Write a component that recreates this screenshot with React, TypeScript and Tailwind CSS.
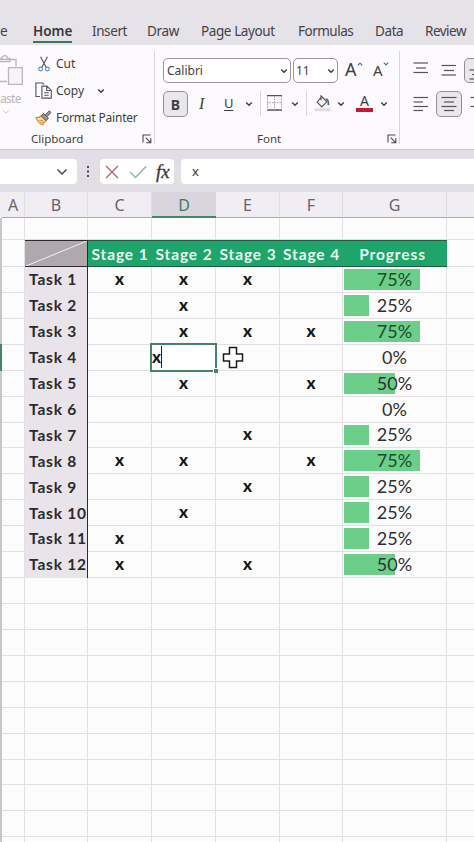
import type { ReactNode } from "react";
import clsx from "clsx";

const tabs = [
  { label: "e", className: "w-[33px]" },
  { label: "Home", className: "w-[59px] font-semibold", active: true },
  { label: "Insert", className: "w-[55px] tracking-[-0.4px]" },
  { label: "Draw", className: "w-[54px] tracking-[-0.3px]" },
  { label: "Page Layout", className: "w-[97px] tracking-[-0.4px]" },
  { label: "Formulas", className: "w-[77px] tracking-[-0.5px]" },
  { label: "Data", className: "w-[50px] tracking-[-0.4px]" },
  { label: "Review", className: "w-[49px] tracking-[-0.5px]" },
];

const tasks = [
  { name: "Task 1", marks: [1, 1, 1, 0], progress: 75 },
  { name: "Task 2", marks: [0, 1, 0, 0], progress: 25 },
  { name: "Task 3", marks: [0, 1, 1, 1], progress: 75 },
  { name: "Task 4", marks: [0, 0, 0, 0], progress: 0, editing: true },
  { name: "Task 5", marks: [0, 1, 0, 1], progress: 50 },
  { name: "Task 6", marks: [0, 0, 0, 0], progress: 0 },
  { name: "Task 7", marks: [0, 0, 1, 0], progress: 25 },
  { name: "Task 8", marks: [1, 1, 0, 1], progress: 75 },
  { name: "Task 9", marks: [0, 0, 1, 0], progress: 25 },
  { name: "Task 10", marks: [0, 1, 0, 0], progress: 25 },
  { name: "Task 11", marks: [1, 0, 0, 0], progress: 25 },
  { name: "Task 12", marks: [1, 0, 1, 0], progress: 50 },
];

const columns = ["A", "B", "C", "D", "E", "F", "G", ""];
const stages = ["Stage 1", "Stage 2", "Stage 3", "Stage 4"];

const rowGrid = "grid grid-cols-[23px_63px_64px_64px_64px_63px_104px_28px] pl-[2px]";
const cell = "border-r border-b border-[#e3e0e5]";

const Chevron = ({ className }: { className?: string }) => (
  <svg viewBox="0 0 8 6" className={clsx("h-[6px] w-[8px] shrink-0", className)} fill="none" stroke="#3f3e43" strokeWidth="1.4">
    <path d="M1.2 1.4 4 4.2l2.8-2.8" />
  </svg>
);

const Launcher = () => (
  <svg viewBox="0 0 10 10" className="h-[10px] w-[10px] shrink-0" fill="none" stroke="#4a494e" strokeWidth="1.1">
    <path d="M1 8.5V1h7.5M3.7 3.7l4.6 4.6M8.8 4.2v4.6H4.2" />
  </svg>
);

const ScissorsIcon = () => (
  <svg viewBox="0 0 12 16" className="h-4 w-3" fill="none" strokeWidth="1.1">
    <path d="M2.6.8 8.2 11.4M9.4.8 3.8 11.4" stroke="#55545a" />
    <circle cx="2.6" cy="13" r="1.9" stroke="#4c93bd" />
    <circle cx="9.4" cy="13" r="1.9" stroke="#4c93bd" />
  </svg>
);

const CopyIcon = () => (
  <svg viewBox="0 0 18 17" className="h-[17px] w-[18px]" fill="none" stroke="#55545a" strokeWidth="1.1">
    <path d="M5 14.5H.9V1h6.6l1.4 1.4" />
    <path d="M6.9 4.1h5l4.4 4.3v7.7H6.9zM11.7 4.3v4.2h4.4M9.2 10.8h4.6M9.2 13.2h4.6" />
  </svg>
);

const BrushIcon = () => (
  <svg viewBox="0 0 17 16" className="h-4 w-[17px]" fill="none">
    <path d="M1 7.6c2.4.3 3.8-.3 5-1.6l5 4.8c-1.4 1.2-2.5 2.6-3.4 4.2C4.5 13.8 2.4 11.4 1 7.6Z" fill="#fbdfae" stroke="#dc943b" strokeWidth="1.2" />
    <path d="m3.6 10.7 4.5-.3M5 13l4.7-1" stroke="#dc943b" />
    <path d="m6.2 5.6 2.3-2.1 5 4.8-2.3 2.3zM10.3 5l3.6-3.8c.7-.6 2.3.8 1.6 1.7L12 6.7" fill="#9b9aa0" stroke="#55545a" />
  </svg>
);

const PasteIcon = () => (
  <svg viewBox="0 0 24 34" className="h-[34px] w-6" fill="none" stroke="#b9b6bc" strokeWidth="1.3">
    <path d="M0 6.5h16v7M0 28.5h7" />
    <path d="M0 8.6h10V5.4H7.6C7.2 3.5 6.3 2.6 4.8 2.6S2.3 3.5 1.9 5.4H0" />
    <path d="M8.5 14.6h13.8v16.8H8.5z" fill="#f7f4f8" />
  </svg>
);

const BordersIcon = () => (
  <svg viewBox="0 0 17 18" className="h-[18px] w-[17px]" fill="none">
    <path d="M1 1.7h15M1 16h15" stroke="#55545a" strokeWidth="1.3" />
    <path d="M1.5 2v14M15.5 2v14M8.5 2v14M1 8.7h15" stroke="#a5a3a9" strokeDasharray="1.5 1" />
  </svg>
);

const FillIcon = () => (
  <svg viewBox="0 0 17 18" className="h-[18px] w-[17px]" fill="none">
    <path d="M7.6 2.5 3.2 8.2l4.6 4.6 5-5zM7 1.2v5" stroke="#55545a" strokeWidth="1.2" />
    <path d="M11.8 5.2c2-.3 3 2.5 2.5 6" stroke="#3f7294" strokeWidth="1.7" />
    <path d="M.5 14.3h16v3H.5z" fill="#dedce0" />
  </svg>
);

const GrowIcon = ({ down }: { down?: boolean }) => (
  <svg viewBox="0 0 6 4" className="h-1 w-[6px]" fill="none" stroke="#3f7294" strokeWidth="1.1">
    <path d={down ? "M.8.7 3 2.9 5.2.7" : "M.8 3.3 3 1.1l2.2 2.2"} />
  </svg>
);

const LinesIcon = ({ lines, className }: { lines: [number, number, number][]; className?: string }) => (
  <svg viewBox="0 0 16 16" className={clsx("h-4 w-4 shrink-0", className)} stroke="#55545a" strokeWidth="1.2">
    {lines.map(([x1, x2, y]) => (
      <line key={y} x1={x1} x2={x2} y1={y} y2={y} />
    ))}
  </svg>
);

const TabBar = () => (
  <nav className="flex h-[45px] shrink-0 items-start bg-[#e5e2e8] pt-[21px] text-[13.5px] leading-5 text-[#434147]">
    {tabs.map(({ label, className, active }) => (
      <div key={label} className={clsx("shrink-0 whitespace-nowrap", className)}>
        <span className={clsx("inline-block", active && "h-[22px] border-b-2 border-[#39775a] text-[#38373c]")}>{label}</span>
      </div>
    ))}
  </nav>
);

const Clipboard = () => (
  <section className="flex h-[98px] w-[154px] shrink-0 flex-col">
    <div className="flex h-[78px] shrink-0">
      <div className="w-[35px] shrink-0 pt-[2px] text-[12px] text-[#b9b6bc]">
        <PasteIcon />
        <div className="h-[22px] pt-[4px] leading-4 tracking-[-0.7px]">aste</div>
        <svg viewBox="0 0 8 6" className="ml-[2px] h-[6px] w-[8px]" fill="none" stroke="#c6c3c9">
          <path d="M1.2 1.4 4 4.2l2.8-2.8" />
        </svg>
      </div>
      <div className="-mt-[1px] flex flex-col text-[12px] leading-[27px] text-[#3f3e43]">
        <div className="flex h-[27px] shrink-0 items-center">
          <span className="ml-[3px] w-[18px]"><ScissorsIcon /></span>Cut
        </div>
        <div className="flex h-[27px] shrink-0 items-center">
          <span className="w-[21px]"><CopyIcon /></span>Copy<Chevron className="ml-[13px]" />
        </div>
        <div className="flex h-[27px] shrink-0 items-center">
          <span className="w-[21px]"><BrushIcon /></span>
          <span className="tracking-[-0.2px] whitespace-nowrap">Format Painter</span>
        </div>
      </div>
    </div>
    <div className="flex h-5 items-center pl-[31px] text-[11.5px] leading-5">
      <span className="w-[111px]">Clipboard</span>
      <Launcher />
    </div>
  </section>
);

const FontGroup = () => (
  <section className="flex h-[93px] w-[246px] shrink-0 flex-col border-x border-[#d8d5da] pl-[8px]">
    <div className="flex h-[39px] shrink-0 pt-[7px] text-[12px]">
      <div className="flex h-[25px] w-[128px] items-center justify-between rounded-[5px] border border-[#99969d] bg-white pr-[2px] pl-[3px]">
        Calibri<Chevron />
      </div>
      <div className="ml-[2px] flex h-[25px] w-[45px] items-center justify-between rounded-[5px] border border-[#99969d] bg-white pr-[2px] pl-[2px]">
        11<Chevron />
      </div>
      <div className="ml-[7px] flex w-[28px] text-[18px] leading-[23px]">
        A<span className="pt-[4px]"><GrowIcon /></span>
      </div>
      <div className="flex text-[15px] leading-[25px]">
        A<span className="pt-[4px]"><GrowIcon down /></span>
      </div>
    </div>
    <div className="flex h-[39px] shrink-0 items-start pt-px">
      <div className="flex h-[26px] w-[25px] items-center justify-center rounded-[5px] border border-[#918e95] bg-[#e9e7eb] text-[14px] font-bold">B</div>
      <div className="ml-[11px] w-[25px] font-['Liberation_Serif'] text-[16px] italic leading-[25px]">I</div>
      <div className="w-[21px] text-[13px] leading-[25px] underline underline-offset-2">U</div>
      <Chevron className="mt-[10px]" />
      <div className="ml-[7px] h-[25px] border-l border-[#d8d5da]" />
      <div className="mt-[3px] ml-[5px] flex">
        <BordersIcon />
        <Chevron className="mt-[7px] ml-[8px]" />
      </div>
      <div className="ml-[7px] h-[25px] border-l border-[#d8d5da]" />
      <div className="mt-[3px] ml-[7px] flex">
        <FillIcon />
        <Chevron className="mt-[7px] ml-[6px]" />
      </div>
      <div className="mt-[2px] ml-[11px] flex">
        <div className="flex h-[19px] w-[17px] justify-center border-b-4 border-[#c01d35] text-[14px] leading-[15px]">A</div>
        <Chevron className="mt-[8px] ml-[7px]" />
      </div>
    </div>
    <div className="flex h-5 shrink-0 items-center pl-[94px] text-[11.5px] leading-5">
      <span className="w-[130px]">Font</span>
      <Launcher />
    </div>
  </section>
);

const AlignGroup = () => (
  <section className="flex w-[74px] shrink-0 flex-col overflow-hidden pl-[13px]">
    <div className="flex h-[39px] shrink-0 items-start pt-[7px]">
      <LinesIcon className="mt-[3px]" lines={[[0.5, 15, 2], [3, 13, 7], [0.5, 15, 11.5]]} />
      <LinesIcon className="mt-[5px] ml-[12px]" lines={[[0.5, 15, 2.5], [3, 13, 7.5], [0.5, 15, 12]]} />
      <div className="ml-[7px] flex h-[25px] w-[25px] shrink-0 items-end rounded-[5px] border border-[#918e95] bg-[#e9e7eb] pl-[4px]">
        <LinesIcon lines={[[0.5, 15, 4], [3, 13, 8.5], [0.5, 15, 13]]} />
      </div>
    </div>
    <div className="flex h-[39px] shrink-0 items-start pt-px">
      <LinesIcon className="mt-[5px]" lines={[[0.5, 15, 1.5], [0.5, 10, 6], [0.5, 15, 10.5], [0.5, 10, 14.5]]} />
      <div className="ml-[7px] flex h-[26px] w-[26px] shrink-0 items-center justify-center rounded-[5px] border border-[#918e95] bg-[#e9e7eb]">
        <LinesIcon lines={[[0.5, 15.5, 1.5], [3, 13, 6], [0.5, 15.5, 10.5], [3, 13, 14.5]]} />
      </div>
      <LinesIcon className="mt-[5px] ml-[8px]" lines={[[0.5, 15, 1.5], [6, 15, 6], [0.5, 15, 10.5], [6, 15, 14.5]]} />
    </div>
  </section>
);

const FormulaBar = () => (
  <div className="flex h-[43px] shrink-0 items-start border-t border-[#cbc9cf] bg-[#e1dfe5] pt-[9px]">
    <div className="flex h-[25px] w-[77px] items-center justify-end rounded-r-[4px] bg-white pr-[9px]">
      <svg viewBox="0 0 12 8" className="h-2 w-3" fill="none" stroke="#4a494e" strokeWidth="1.5">
        <path d="m1.5 1.5 4.5 4.5 4.5-4.5" />
      </svg>
    </div>
    <svg viewBox="0 0 4 13" className="mt-[6px] ml-[9px] h-[13px] w-1" fill="#4a494e">
      <rect x="1" y="1" width="2" height="2" />
      <rect x="1" y="5.5" width="2" height="2" />
      <rect x="1" y="10" width="2" height="2" />
    </svg>
    <div className="ml-[10px] flex h-[25px] w-[74px] items-center rounded-[4px] bg-white pl-[5px]">
      <svg viewBox="0 0 14 14" className="h-[14px] w-[14px] shrink-0" fill="none" stroke="#bd6078" strokeWidth="1.4">
        <path d="m1 1 12 12M13 1 1 13" />
      </svg>
      <svg viewBox="0 0 18 14" className="ml-[10px] h-[14px] w-[18px] shrink-0" fill="none" stroke="#83b99d" strokeWidth="1.4">
        <path d="m1 7 5.5 5.5L17 1.5" />
      </svg>
      <span className="ml-[9px] font-['Liberation_Serif'] text-[19px] italic leading-5 text-[#38373c] [-webkit-text-stroke:0.3px_#38373c]">fx</span>
    </div>
    <div className="ml-[7px] flex h-[25px] flex-1 items-center rounded-l-[4px] bg-white pl-[11px] text-[13px] text-[#38373c]">x</div>
  </div>
);

const ColumnHeads = () => (
  <div className={clsx(rowGrid, "h-[26px] shrink-0 bg-[#f0edf3] text-[16px] leading-[24px] text-[#66646a]")}>
    {columns.map((name) => (
      <div
        key={name}
        className={clsx(
          "border-b pt-px text-center",
          name === "D" ? "border-[#438565] bg-[#d8d6dc] text-[#43795f] shadow-[inset_0_-1px_0_#438565]" : "border-r border-r-[#dedbe1] border-b-[#a9a6ad]",
        )}
      >
        {name}
      </div>
    ))}
  </div>
);

const EmptyRow = ({ className }: { className: string }) => (
  <div className={clsx(rowGrid, className)}>
    {columns.map((name) => <div key={name} className={cell} />)}
  </div>
);

const HeaderRow = () => (
  <div className={clsx(rowGrid, "h-[27px] text-[15.5px] leading-none font-bold text-[#e6f8ee]")}>
    <div className={cell} />
    <div className="border-y border-r border-[#2b2b2e] bg-[#afa8ad]">
      <svg viewBox="0 0 62 25" className="h-[25px] w-full" preserveAspectRatio="none" stroke="#f3eff3">
        <line x1="1" y1="25" x2="62" y2="0" />
      </svg>
    </div>
    {stages.map((stage) => (
      <div key={stage} className="flex items-center justify-center border-y border-[#1d5c42] bg-[#1fa56c] pt-[2px] tracking-[0.9px] whitespace-nowrap">
        {stage}
      </div>
    ))}
    <div className="flex items-center justify-center border-y border-[#1d5c42] bg-[#1fa56c] pt-[2px] pr-[5px] tracking-[0.9px]">Progress</div>
    <div className={cell} />
  </div>
);

const EditingCell = () => (
  <div className={clsx(cell, "relative")}>
    <div className="absolute -top-[2px] -right-[2px] -bottom-[2px] -left-[2px] z-10 flex items-center border-2 border-[#438565] bg-white">
      <span className="pb-[2px] text-[17px] font-black">x</span>
      <span className="h-[22px] border-l border-[#222]" />
    </div>
    <div className="absolute -right-[3px] -bottom-[3px] z-20 h-[5px] w-[5px] border-t border-l border-white bg-[#438565]" />
    <svg viewBox="0 0 22 24" className="absolute top-[1px] left-[70px] z-20 h-6 w-[22px]" fill="white" stroke="#1c1c1e" strokeWidth="1.5">
      <path d="M7.5 1.5h7V8h6v7h-6v6.5h-7V15h-6V8h6z" />
    </svg>
  </div>
);

const Progress = ({ value }: { value: number }) => (
  <div className={clsx(cell, "relative flex items-center justify-center text-[18px] font-normal text-[#2f2e32]")}>
    {value > 0 && (
      <div className="absolute inset-y-[2px] left-px bg-[#6bce89]" style={{ width: `${value === 25 ? 25 : value + 1}px` }} />
    )}
    <span className={clsx("relative pb-px", value === 75 && "text-[#1c4a2b]")}>{value}%</span>
  </div>
);

const Shell = ({ children }: { children: ReactNode }) => (
  <div className="flex h-[842px] w-[474px] flex-col overflow-hidden bg-[#fdfcfd] font-['Noto_Sans',sans-serif] text-[#3f3e43]">{children}</div>
);

export default function App() {
  return (
    <Shell>
      <TabBar />
      <div className="flex h-[104px] shrink-0 bg-[#fcfafd] pt-[6px]">
        <Clipboard />
        <FontGroup />
        <AlignGroup />
      </div>
      <FormulaBar />
      <ColumnHeads />
      <main className="relative min-h-0 flex-1 font-['Lato',sans-serif]">
        <EmptyRow className="h-[22px]" />
        <HeaderRow />
        {tasks.map(({ name, marks, progress, editing }) => (
          <div key={name} className={clsx(rowGrid, "h-[25.93px] text-[15.5px] leading-none font-bold text-[#161618]")}>
            <div className={cell} />
            <div className="flex items-center border-r border-[#2b2b2e] bg-[#e8e4e9] pl-[4px] tracking-[0.8px] whitespace-nowrap text-[#2b2a2e]">
              {name}
            </div>
            {marks.map((mark, i) =>
              editing && i === 1 ? (
                <EditingCell key={i} />
              ) : (
                <div key={i} className={clsx(cell, "flex items-center justify-center pb-[2px] text-[17px] font-black")}>{mark ? "x" : ""}</div>
              ),
            )}
            <Progress value={progress} />
            <div className={cell} />
          </div>
        ))}
        {Array.from({ length: 11 }, (_, i) => <EmptyRow key={i} className="h-[25.93px]" />)}
        <div className="absolute inset-y-0 left-0 w-[2px] bg-[#c9c7cb]" />
        <div className="absolute top-[126px] left-0 h-[27px] w-[2px] bg-[#438565]" />
      </main>
    </Shell>
  );
}
